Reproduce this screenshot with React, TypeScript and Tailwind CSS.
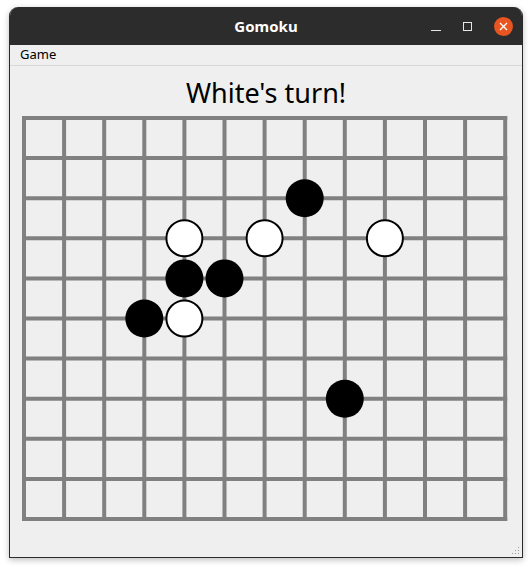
import React from "react";

const CELL = 40.1;
const COLS = 12;
const ROWS = 10;

type Stone = { c: number; r: number; color: "black" | "white" };

const stones: Stone[] = [
  { c: 7, r: 2, color: "black" },
  { c: 4, r: 3, color: "white" },
  { c: 6, r: 3, color: "white" },
  { c: 9, r: 3, color: "white" },
  { c: 4, r: 4, color: "black" },
  { c: 5, r: 4, color: "black" },
  { c: 3, r: 5, color: "black" },
  { c: 4, r: 5, color: "white" },
  { c: 8, r: 7, color: "black" },
];

function Board() {
  const w = CELL * COLS + 4;
  const h = CELL * ROWS + 4;
  const pos = (i: number) => 2 + CELL * i;
  return (
    <svg width={w} height={h} className="block overflow-visible">
      {Array.from({ length: COLS + 1 }).map((_, i) => (
        <line key={"v" + i} x1={pos(i)} y1={0} x2={pos(i)} y2={h} stroke="#808080" strokeWidth={4} />
      ))}
      {Array.from({ length: ROWS + 1 }).map((_, i) => (
        <line key={"h" + i} x1={0} y1={pos(i)} x2={w} y2={pos(i)} stroke="#808080" strokeWidth={4} />
      ))}
      {stones.map((s, i) =>
        s.color === "black" ? (
          <circle key={i} cx={pos(s.c)} cy={pos(s.r)} r={19} fill="#000" />
        ) : (
          <circle key={i} cx={pos(s.c)} cy={pos(s.r)} r={18} fill="#fff" stroke="#000" strokeWidth={2} />
        )
      )}
    </svg>
  );
}

export default function App() {
  return (
    <div className="w-[532px] h-[567px] bg-white pt-[7px] pl-[9px]" style={{ fontFamily: '"Noto Sans", "Open Sans", sans-serif' }}>
      <div className="w-[514px] h-[551px] flex flex-col rounded-t-[9px] overflow-hidden border-x border-b border-[#2b2b2b] bg-[#efefef] shadow-[0_2px_6px_rgba(0,0,0,0.25)]">
        {/* title bar */}
        <div className="h-[38px] bg-[#2c2c2c] flex items-center relative shrink-0">
          <div className="flex-1 text-center text-white font-bold text-[15px]">Gomoku</div>
          <div className="absolute right-[9px] top-0 h-full flex items-center gap-[22px]">
            <div className="w-[10px] h-[1px] bg-[#e6e6e6] mt-[9px]" />
            <div className="w-[9px] h-[9px] border border-[#e6e6e6]" />
            <div className="w-[19px] h-[19px] rounded-full bg-[#e95420] flex items-center justify-center">
              <svg width="9" height="9" viewBox="0 0 9 9">
                <path d="M1 1 L8 8 M8 1 L1 8" stroke="#fff" strokeWidth="1.4" />
              </svg>
            </div>
          </div>
        </div>
        {/* menu bar */}
        <div className="h-[21px] border-b border-[#d8d8d8] flex items-center pl-[10px] text-[13px] text-black shrink-0">
          Game
        </div>
        {/* content */}
        <div className="flex-1 flex flex-col items-center relative">
          <div className="h-[50px] flex items-center justify-center text-[27px] text-black leading-none pt-[2px]">
            White's turn!
          </div>
          <div className="self-start ml-[11.5px]">
            <Board />
          </div>
          <div className="absolute right-[3px] bottom-[3px] grid grid-cols-3 gap-[2px]">
            {[0, 0, 1, 0, 1, 1, 1, 1, 1].map((v, i) => (
              <div key={i} className={v ? "w-[1px] h-[1px] bg-[#9a9a9a]" : "w-[1px] h-[1px]"} />
            ))}
          </div>
        </div>
      </div>
    </div>
  );
}
